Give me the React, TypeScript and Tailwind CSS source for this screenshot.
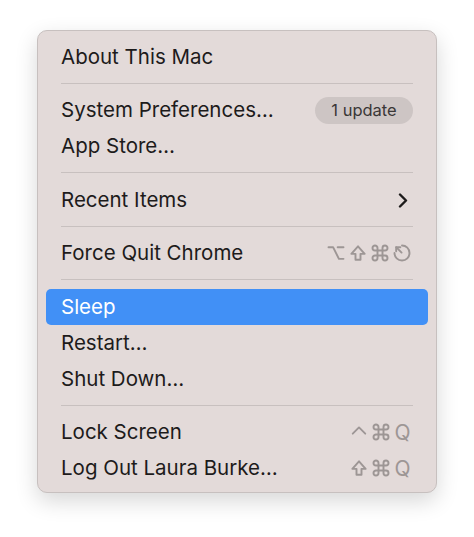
import React from "react";

type Key = "opt" | "shift" | "cmd" | "esc" | "ctrl" | "Q";

function KeyGlyph({ k }: { k: Key }) {
  if (k === "Q") {
    return <span className="w-[19px] text-center text-[21px] leading-none">Q</span>;
  }
  const common = {
    width: 20,
    height: 20,
    viewBox: "0 0 24 24",
    fill: "none",
    stroke: "currentColor",
    strokeWidth: 2.3,
    strokeLinecap: "round" as const,
    strokeLinejoin: "round" as const,
  };
  switch (k) {
    case "opt":
      return (
        <svg {...common}>
          <path d="M3 5h5.5l7 14H21" />
          <path d="M14 5h7" />
        </svg>
      );
    case "shift":
      return (
        <svg {...common}>
          <path d="M9 20v-7H4L12 4l8 9h-5v7H9z" />
        </svg>
      );
    case "cmd":
      return (
        <svg {...common}>
          <path d="M15 6v12a3 3 0 1 0 3-3H6a3 3 0 1 0 3 3V6a3 3 0 1 0-3 3h12a3 3 0 1 0-3-3" />
        </svg>
      );
    case "ctrl":
      return (
        <svg {...common}>
          <path d="M4.5 14l7.5-7.5 7.5 7.5" />
        </svg>
      );
    case "esc":
      return (
        <svg {...common}>
          <path d="M12 3a9 9 0 1 1-9 9" />
          <path d="M5 5l6.5 6.5" />
          <path d="M5 10V5h5" />
        </svg>
      );
  }
}

function Shortcut({ keys }: { keys: Key[] }) {
  return (
    <div className="flex items-center gap-[2px] text-[#9d9695]">
      {keys.map((k, i) => (
        <KeyGlyph key={i} k={k} />
      ))}
    </div>
  );
}

function Row({
  label,
  active,
  right,
}: {
  label: string;
  active?: boolean;
  right?: React.ReactNode;
}) {
  return (
    <div
      className={
        "flex h-[36px] items-center justify-between rounded-[5px] pl-[15px] pr-[16px] " +
        (active ? "bg-[#4190f6] text-white" : "text-[#1d1b1b]")
      }
    >
      <span className="text-[20.5px] leading-none">{label}</span>
      {right}
    </div>
  );
}

function Separator({ tall }: { tall?: boolean }) {
  return (
    <div className={"px-[15px] pt-2 " + (tall ? "pb-[9px]" : "pb-2")}>
      <div className="h-px bg-[#c8c0bf]" />
    </div>
  );
}

export default function App() {
  return (
    <div className="min-h-[537px] bg-white pl-[37px] pt-[30px] font-['Inter','Liberation_Sans',sans-serif]">
      <div className="w-[400px] rounded-[10px] border border-[#c7c0bf] bg-[#e3dad9] px-[8px] pb-[6px] pt-[8px] shadow-[0_8px_22px_rgba(0,0,0,0.16)]">
        <Row label="About This Mac" />
        <Separator />
        <Row
          label="System Preferences…"
          right={
            <span className="-mr-[1px] flex h-[27px] w-[98px] items-center justify-center rounded-full bg-[#cdc5c4] text-[16.5px] text-[#3a3737]">
              1 update
            </span>
          }
        />
        <Row label="App Store…" />
        <Separator tall />
        <Row
          label="Recent Items"
          right={
            <svg width="10" height="15" viewBox="0 0 10 15" fill="none" stroke="#1d1b1b" strokeWidth="2.4" strokeLinecap="round" strokeLinejoin="round" className="mr-[4px]">
              <path d="M2 1.5l6 6-6 6" />
            </svg>
          }
        />
        <Separator />
        <Row label="Force Quit Chrome" right={<Shortcut keys={["opt", "shift", "cmd", "esc"]} />} />
        <Separator tall />
        <Row label="Sleep" active />
        <Row label="Restart…" />
        <Row label="Shut Down…" />
        <Separator />
        <Row label="Lock Screen" right={<Shortcut keys={["ctrl", "cmd", "Q"]} />} />
        <Row label="Log Out Laura Burke…" right={<Shortcut keys={["shift", "cmd", "Q"]} />} />
      </div>
    </div>
  );
}
